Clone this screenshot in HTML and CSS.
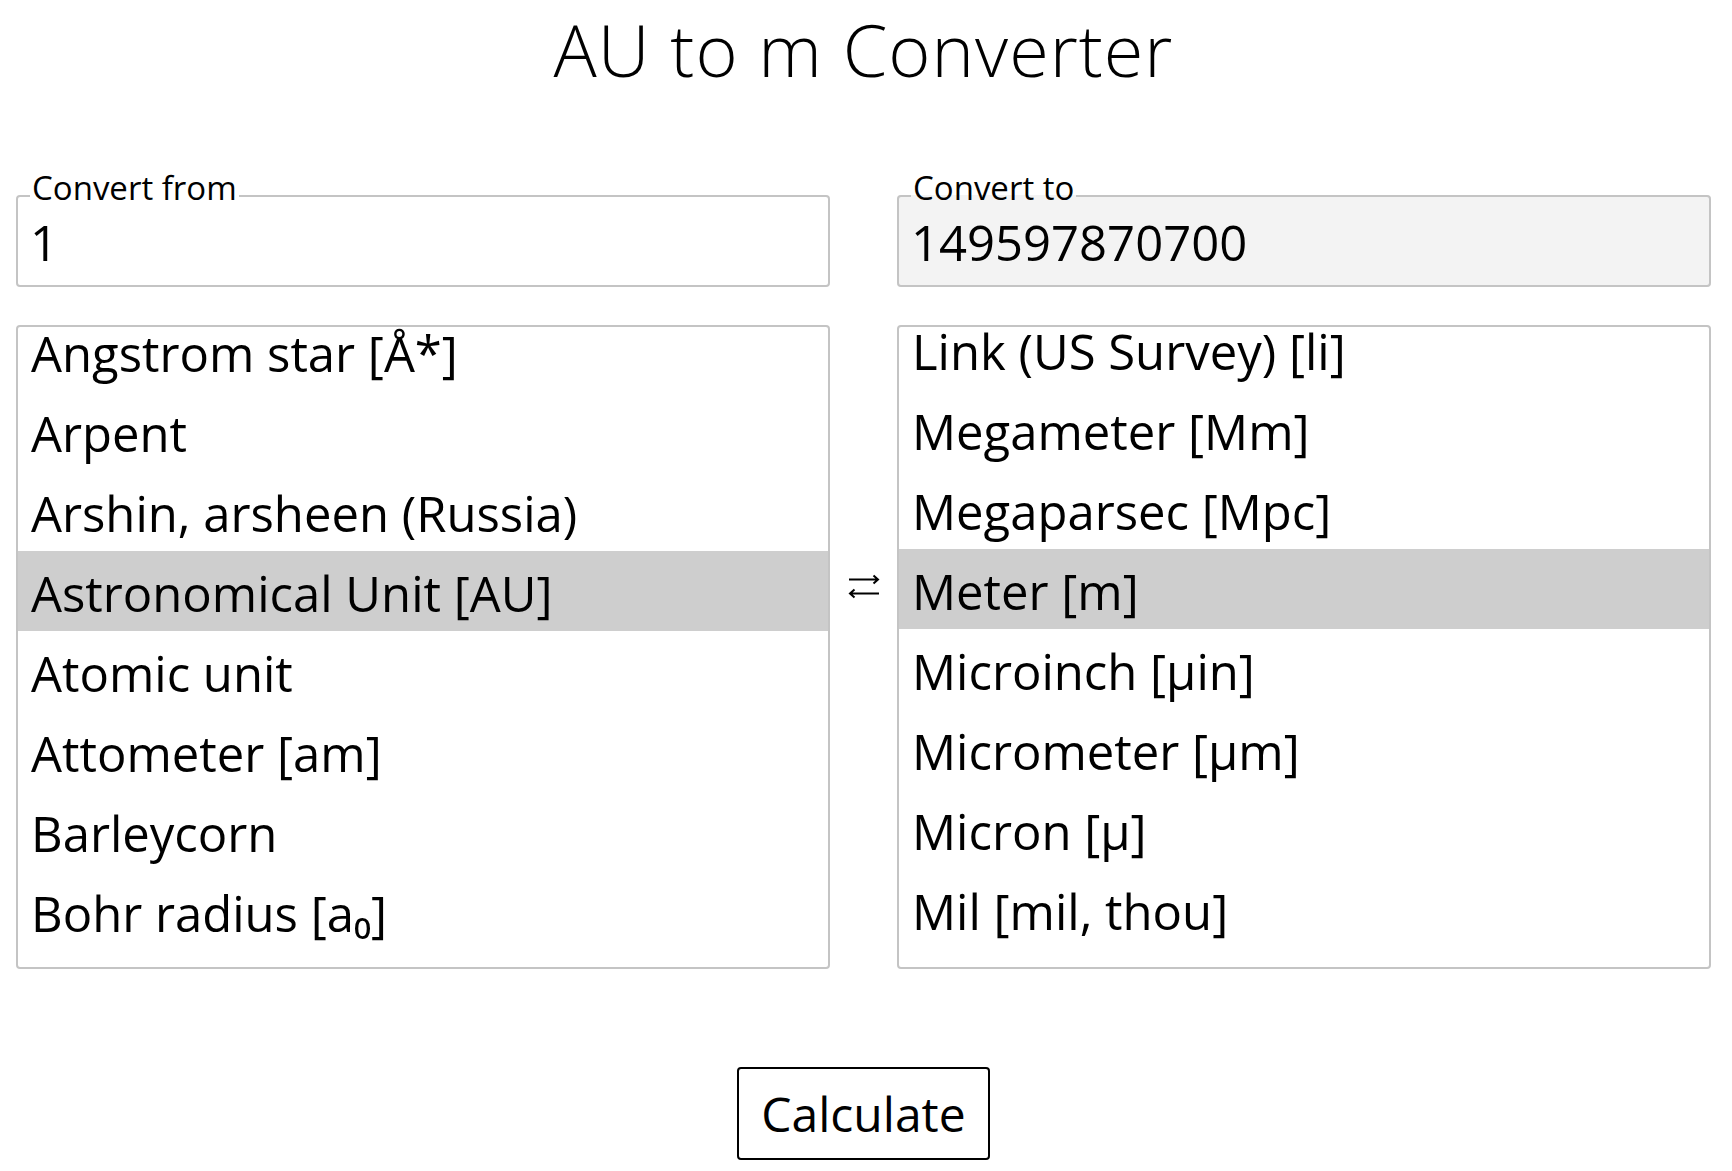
FILE: index.html
```html
<!DOCTYPE html>
<html lang="en">
<head>
    <meta charset="UTF-8">
    <meta name="viewport" content="width=device-width, initial-scale=1.0">
    <title>AU to m Converter</title>
    <link rel="stylesheet" href="styles.css">
</head>
<body>

    <main class="page">
        <h1>AU to m Converter</h1>

        <div class="converter">
            <fieldset class="field">
                <legend>Convert from</legend>
                <input type="text" class="value-input" value="1">
            </fieldset>

            <div class="spacer"></div>

            <fieldset class="field readonly">
                <legend>Convert to</legend>
                <input type="text" class="value-input" value="149597870700" readonly>
            </fieldset>

            <div class="unit-list">
                <!-- liste défilée : l'unité choisie reste visible -->
                <ul style="margin-top: -16px">
                    <li>Angstrom star [Å*]</li>
                    <li>Arpent</li>
                    <li>Arshin, arsheen (Russia)</li>
                    <li class="selected">Astronomical Unit [AU]</li>
                    <li>Atomic unit</li>
                    <li>Attometer [am]</li>
                    <li>Barleycorn</li>
                    <li>Bohr radius [a₀]</li>
                </ul>
            </div>

            <div class="swap">
                <svg width="32" height="28" viewBox="0 0 32 28" fill="none" stroke="#000" stroke-width="2">
                    <path d="M1 5.5H30M25.5 1.5L30 5.5L25.5 9.5"/>
                    <path d="M31 19.5H2M6.5 15.5L2 19.5L6.5 23.5"/>
                </svg>
            </div>

            <div class="unit-list">
                <ul style="margin-top: -18px">
                    <li>Link (US Survey) [li]</li>
                    <li>Megameter [Mm]</li>
                    <li>Megaparsec [Mpc]</li>
                    <li class="selected">Meter [m]</li>
                    <li>Microinch [μin]</li>
                    <li>Micrometer [μm]</li>
                    <li>Micron [μ]</li>
                    <li>Mil [mil, thou]</li>
                </ul>
            </div>
        </div>

        <div class="actions">
            <button type="button" class="calc-btn">Calculate</button>
        </div>
    </main>

</body>
</html>
```

FILE: styles.css
```css
body {
    margin: 0;
    font-family: "Open Sans", "Noto Sans", sans-serif;
    color: #000;
    background: #fff;
}

.page {
    padding: 0 21px 0 16px;
}

h1 {
    margin: 0;
    font-size: 72px;
    font-weight: 300;
    letter-spacing: 1px;
    text-align: center;
}

.converter {
    display: grid;
    grid-template-columns: 1fr 67px 1fr;
    row-gap: 38px;
    margin-top: 82px;
}

.field {
    margin: 0;
    padding: 0 12px;
    border: 2px solid #c4c4c4;
    border-radius: 4px;
    min-width: 0;
}

.field legend {
    padding: 0 2px;
    font-size: 33px;
    line-height: 32px;
    position: relative;
    top: -8px;
}

.field.readonly {
    background: #f3f3f3;
}

.value-input {
    display: block;
    width: 100%;
    height: 73px;
    box-sizing: border-box;
    padding: 0 0 13px;
    border: 0;
    outline: none;
    background: transparent;
    font-family: inherit;
    font-size: 49px;
    color: #000;
}

.unit-list {
    height: 644px;
    box-sizing: border-box;
    border: 2px solid #c4c4c4;
    border-radius: 4px;
    overflow: hidden;
}

.unit-list ul {
    list-style: none;
    margin: 0;
    padding: 0;
}

.unit-list li {
    height: 80px;
    box-sizing: border-box;
    padding: 5px 13px 0;
    font-size: 49px;
    line-height: 75px;
    white-space: nowrap;
}

.unit-list li.selected {
    background: #cecece;
}

.swap {
    justify-self: center;
    margin-top: 249px;
}

.swap svg {
    display: block;
}

.actions {
    margin-top: 98px;
    text-align: center;
}

.calc-btn {
    padding: 12px 22px;
    border: 2px solid #000;
    border-radius: 4px;
    background: #fff;
    font-family: inherit;
    font-size: 48px;
    color: #000;
    cursor: pointer;
}
```
